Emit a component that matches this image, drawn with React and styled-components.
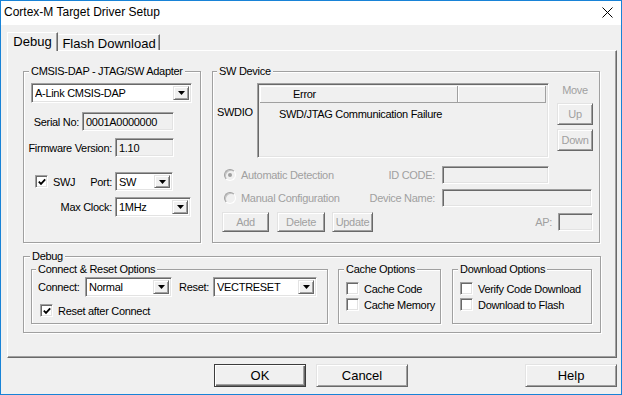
import React from 'react'
import styled, { createGlobalStyle, css } from 'styled-components'

const GlobalStyle = createGlobalStyle`
  html, body {
    margin: 0;
    padding: 0;
    background: #fff;
  }
  body {
    font-family: "Liberation Sans", Arial, sans-serif;
    font-size: 11px;
    letter-spacing: -0.3px;
    color: #000;
  }
  * { box-sizing: border-box; }
`

const sunken = css`
  border: 1px solid;
  border-color: #a0a0a0 #fff #fff #a0a0a0;
  box-shadow: inset 1px 1px 0 #696969, inset -1px -1px 0 #e3e3e3;
`

const raised = css`
  border: 1px solid;
  border-color: #e3e3e3 #696969 #696969 #e3e3e3;
  box-shadow: inset 1px 1px 0 #fff, inset -1px -1px 0 #a0a0a0;
`

const Window = styled.div`
  width: 622px;
  height: 395px;
  border: 1px solid #1883d7;
  display: flex;
  flex-direction: column;
  background: #f0f0f0;
  overflow: hidden;
`

const TitleBar = styled.div`
  height: 24px;
  flex: none;
  background: #fff;
  display: flex;
  align-items: center;
  justify-content: space-between;
  padding: 0 8px 2px 3px;
  font-size: 12px;
  letter-spacing: 0;
`

const Body = styled.div`
  flex: 1;
  display: flex;
  flex-direction: column;
  padding: 7px 4px 0 6px;
`

const TabRow = styled.div`
  display: flex;
  align-items: flex-end;
  height: 18px;
`

const Tab = styled.div`
  position: relative;
  width: ${p => p.$w}px;
  display: flex;
  align-items: center;
  justify-content: center;
  font-size: 13px;
  letter-spacing: 0;
  background: #f0f0f0;
  border-top: 1px solid #fff;
  border-left: 1px solid ${p => (p.$active ? '#fff' : '#f0f0f0')};
  border-right: 1px solid #696969;
  box-shadow: inset -1px 0 0 #a0a0a0;
  ${p =>
    p.$active
      ? css`
          height: 19px;
          margin-bottom: -1px;
          z-index: 1;
          padding-bottom: 1px;
        `
      : css`
          height: 16px;
          padding-top: 1px;
        `}
`

const Panel = styled.div`
  height: 308px;
  flex: none;
  border-top: 1px solid #fff;
  border-left: 1px solid #fff;
  border-right: 1px solid #696969;
  border-bottom: 1px solid #696969;
  box-shadow: inset -1px -1px 0 #a0a0a0;
  padding: 20px 0 0 15px;
  display: flex;
  flex-direction: column;
`

const TopRow = styled.div`
  display: flex;
  gap: 11px;
`

const Group = styled.div`
  width: ${p => p.$w}px;
  height: ${p => p.$h}px;
  flex: none;
  border: 1px solid #a0a0a0;
  box-shadow: inset 1px 1px 0 #fff, 1px 1px 0 #fff;
  margin-top: ${p => p.$mt || 0}px;
  margin-left: ${p => p.$ml || 0}px;
  display: flex;
  flex-direction: column;
`

const Legend = styled.span`
  display: block;
  width: fit-content;
  margin: -7px 0 0 ${p => p.$ml}px;
  padding: 0 2px;
  line-height: 13px;
  height: 13px;
  background: #f0f0f0;
  white-space: nowrap;
`

const Line = styled.div`
  display: flex;
  align-items: center;
  margin-top: ${p => p.$mt || 0}px;
  padding-left: ${p => p.$pl || 0}px;
  padding-right: ${p => p.$pr || 0}px;
  gap: ${p => (p.$gap === undefined ? 3 : p.$gap)}px;
`

const Label = styled.span`
  flex: none;
  white-space: nowrap;
  width: ${p => (p.$w ? `${p.$w}px` : 'auto')};
  text-align: ${p => p.$align || 'left'};
  margin-left: ${p => p.$ml || 0}px;
  color: ${p => (p.$off ? '#a0a0a0' : '#000')};
`

const Cell = styled.div`
  width: ${p => p.$w}px;
  flex: none;
  display: flex;
  align-items: center;
  padding-left: ${p => p.$pl || 0}px;
  gap: 4px;
`

const Spacer = styled.div`
  flex: 1;
`

const ComboBox = styled.div`
  ${sunken}
  width: ${p => p.$w}px;
  height: ${p => p.$h || 20}px;
  flex: none;
  margin-left: ${p => p.$ml || 0}px;
  background: #fff;
  display: flex;
  align-items: stretch;
  padding: 2px 2px 2px 3px;
`

const ComboText = styled.span`
  flex: 1;
  display: flex;
  align-items: center;
  white-space: nowrap;
  overflow: hidden;
`

const ArrowButton = styled.span`
  ${raised}
  width: 16px;
  flex: none;
  background: #f0f0f0;
  display: flex;
  align-items: center;
  justify-content: center;
`

const Field = styled.div`
  ${sunken}
  width: ${p => p.$w}px;
  height: ${p => p.$h || 19}px;
  flex: none;
  background: #f0f0f0;
  display: flex;
  align-items: center;
  padding-left: 3px;
  white-space: nowrap;
`

const Box = styled.span`
  ${sunken}
  width: 13px;
  height: 13px;
  flex: none;
  background: #fff;
  display: inline-flex;
  align-items: center;
  justify-content: center;
`

const RadioDot = styled.span`
  width: 12px;
  height: 12px;
  flex: none;
  border-radius: 50%;
  border: 1px solid;
  border-color: #a0a0a0 #fff #fff #a0a0a0;
  box-shadow: inset 1px 1px 0 #c4c4c4;
  background: #f0f0f0;
  display: inline-flex;
  align-items: center;
  justify-content: center;
  &::after {
    content: '';
    display: ${p => (p.$on ? 'block' : 'none')};
    width: 4px;
    height: 4px;
    border-radius: 50%;
    background: #a0a0a0;
  }
`

const ListBox = styled.div`
  ${sunken}
  width: 292px;
  height: 75px;
  flex: none;
  background: #f0f0f0;
  padding: 2px;
  display: flex;
  flex-direction: column;
`

const ListHeader = styled.div`
  display: flex;
  height: 17px;
  flex: none;
`

const HeaderCell = styled.div`
  width: ${p => (p.$w ? `${p.$w}px` : 'auto')};
  flex: ${p => (p.$w ? 'none' : '1')};
  border-right: 1px solid #a0a0a0;
  border-bottom: 1px solid #a0a0a0;
  box-shadow: inset 1px 1px 0 #fff;
  padding-left: ${p => p.$pl || 0}px;
  display: flex;
  align-items: center;
`

const ListRow = styled.div`
  padding: 5px 0 0 19px;
  line-height: 13px;
  white-space: nowrap;
`

const SideLabel = styled.div`
  width: 44px;
  flex: none;
  align-self: flex-start;
  padding: 23px 0 0 4px;
  line-height: 13px;
`

const MoveColumn = styled.div`
  width: 36px;
  flex: none;
  margin-left: 8px;
  align-self: flex-start;
  display: flex;
  flex-direction: column;
  align-items: center;
`

const MoveLabel = styled.span`
  color: #a0a0a0;
  line-height: 13px;
  margin-top: 1px;
`

const Button = styled.div`
  ${raised}
  width: ${p => p.$w}px;
  height: ${p => p.$h || 20}px;
  flex: none;
  margin-top: ${p => p.$mt || 0}px;
  margin-left: ${p => p.$ml || 0}px;
  background: #f0f0f0;
  color: ${p => (p.$off ? '#a0a0a0' : '#000')};
  display: flex;
  align-items: center;
  justify-content: center;
  white-space: nowrap;
`

const DialogButton = styled.div`
  width: 92px;
  height: 23px;
  flex: none;
  margin-left: ${p => (p.$auto ? 'auto' : `${p.$ml || 0}px`)};
  background: #f0f0f0;
  font-size: 13px;
  letter-spacing: 0;
  display: flex;
  align-items: center;
  justify-content: center;
  ${p =>
    p.$default
      ? css`
          border: 1px solid #3c3c3c;
          box-shadow: inset 1px 1px 0 #fff, inset -1px -1px 0 #696969, inset -2px -2px 0 #a0a0a0;
        `
      : raised}
`

const ButtonRow = styled.div`
  display: flex;
  margin-top: 6px;
  padding-left: 207px;
`

const Arrow = () => (
  <svg width="7" height="4" viewBox="0 0 7 4">
    <polygon points="0,0 7,0 3.5,4" fill="#000" />
  </svg>
)

const Tick = () => (
  <svg width="8" height="8" viewBox="0 0 8 8">
    <polyline points="0.8,3.6 3,5.9 7.2,1.4" fill="none" stroke="#000" strokeWidth="1.8" />
  </svg>
)

const Combo = ({ w, h, ml, children }) => (
  <ComboBox $w={w} $h={h} $ml={ml}>
    <ComboText>{children}</ComboText>
    <ArrowButton>
      <Arrow />
    </ArrowButton>
  </ComboBox>
)

const Check = ({ on, children }) => (
  <>
    <Box>{on && <Tick />}</Box>
    <Label $ml={1}>{children}</Label>
  </>
)

const CloseIcon = () => (
  <svg width="11" height="11" viewBox="0 0 11 11">
    <path d="M0.5 0.5 L10.5 10.5 M10.5 0.5 L0.5 10.5" stroke="#000" strokeWidth="1" />
  </svg>
)

export default function App() {
  return (
    <>
      <GlobalStyle />
      <Window>
        <TitleBar>
          <span>Cortex-M Target Driver Setup</span>
          <CloseIcon />
        </TitleBar>
        <Body>
          <TabRow>
            <Tab $active $w={51}>Debug</Tab>
            <Tab $w={102}>Flash Download</Tab>
          </TabRow>
          <Panel>
            <TopRow>
              <Group $w={178} $h={172}>
                <Legend $ml={5}>CMSIS-DAP - JTAG/SW Adapter</Legend>
                <Line $mt={5} $pl={7}>
                  <Combo w={161}>A-Link CMSIS-DAP</Combo>
                </Line>
                <Line $mt={9}>
                  <Label $w={55} $align="right">Serial No:</Label>
                  <Field $w={92}>0001A0000000</Field>
                </Line>
                <Line $mt={7}>
                  <Label $w={88} $align="right">Firmware Version:</Label>
                  <Field $w={59}>1.10</Field>
                </Line>
                <Line $mt={15}>
                  <Cell $w={88} $pl={11}>
                    <Check on>SWJ</Check>
                    <Spacer />
                    <Label>Port:</Label>
                  </Cell>
                  <Combo w={58} h={19}>SW</Combo>
                </Line>
                <Line $mt={6}>
                  <Label $w={88} $align="right">Max Clock:</Label>
                  <Combo w={76}>1MHz</Combo>
                </Line>
              </Group>

              <Group $w={388} $h={172}>
                <Legend $ml={4}>SW Device</Legend>
                <Line $mt={5} $gap={0}>
                  <SideLabel>SWDIO</SideLabel>
                  <ListBox>
                    <ListHeader>
                      <HeaderCell $w={198} $pl={33}>Error</HeaderCell>
                      <HeaderCell />
                    </ListHeader>
                    <ListRow>SWD/JTAG Communication Failure</ListRow>
                  </ListBox>
                  <MoveColumn>
                    <MoveLabel>Move</MoveLabel>
                    <Button $off $w={36} $h={22} $mt={6}>Up</Button>
                    <Button $off $w={36} $h={22} $mt={4}>Down</Button>
                  </MoveColumn>
                </Line>
                <Line $mt={8} $gap={0}>
                  <Cell $w={144} $pl={11}>
                    <RadioDot $on />
                    <Label $off $ml={1}>Automatic Detection</Label>
                  </Cell>
                  <Label $off $w={78} $align="right">ID CODE:</Label>
                  <Field $w={107} $h={18} style={{ marginLeft: 7 }} />
                </Line>
                <Line $mt={5} $gap={0}>
                  <Cell $w={144} $pl={11}>
                    <RadioDot />
                    <Label $off $ml={1}>Manual Configuration</Label>
                  </Cell>
                  <Label $off $w={78} $align="right">Device Name:</Label>
                  <Field $w={150} $h={18} style={{ marginLeft: 7 }} />
                </Line>
                <Line $mt={5} $pl={9} $pr={6} $gap={0}>
                  <Button $off $w={47}>Add</Button>
                  <Button $off $w={48} $ml={8}>Delete</Button>
                  <Button $off $w={41} $ml={7}>Update</Button>
                  <Spacer />
                  <Label $off>AP:</Label>
                  <Field $w={35} $h={18} style={{ marginLeft: 6 }} />
                </Line>
              </Group>
            </TopRow>

            <Group $w={578} $h={77} $mt={13}>
              <Legend $ml={6}>Debug</Legend>
              <Line $mt={6} $pl={7} $gap={0}>
                <Group $w={297} $h={55}>
                  <Legend $ml={4}>Connect &amp; Reset Options</Legend>
                  <Line $mt={1} $pl={6} $gap={0}>
                    <Label $w={47}>Connect:</Label>
                    <Combo w={87}>Normal</Combo>
                    <Label $w={34} $ml={7}>Reset:</Label>
                    <Combo w={104}>VECTRESET</Combo>
                  </Line>
                  <Line $mt={7} $pl={8} $gap={4}>
                    <Check on>Reset after Connect</Check>
                  </Line>
                </Group>
                <Group $w={103} $h={55} $ml={10}>
                  <Legend $ml={5}>Cache Options</Legend>
                  <Line $mt={6} $pl={7} $gap={4}>
                    <Check>Cache Code</Check>
                  </Line>
                  <Line $mt={3} $pl={7} $gap={4}>
                    <Check>Cache Memory</Check>
                  </Line>
                </Group>
                <Group $w={140} $h={55} $ml={11}>
                  <Legend $ml={5}>Download Options</Legend>
                  <Line $mt={6} $pl={7} $gap={4}>
                    <Check>Verify Code Download</Check>
                  </Line>
                  <Line $mt={3} $pl={7} $gap={4}>
                    <Check>Download to Flash</Check>
                  </Line>
                </Group>
              </Line>
            </Group>
          </Panel>
          <ButtonRow>
            <DialogButton $default>OK</DialogButton>
            <DialogButton $ml={10}>Cancel</DialogButton>
            <DialogButton $auto>Help</DialogButton>
          </ButtonRow>
        </Body>
      </Window>
    </>
  )
}
